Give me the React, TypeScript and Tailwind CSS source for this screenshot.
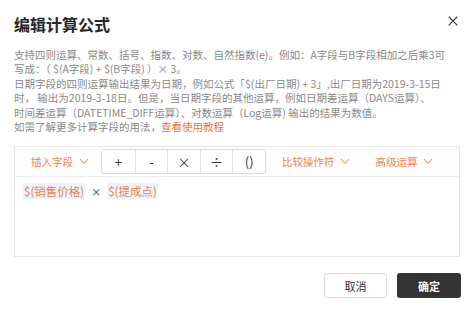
import React from "react";

const Chevron = () => (
  <svg width="10" height="7" viewBox="0 0 10 7" className="ml-[6px]">
    <polyline points="1,1 5,5.5 9,1" fill="none" stroke="#f39a63" strokeWidth="1.1" />
  </svg>
);

export default function App() {
  const font = { fontFamily: '"Noto Sans CJK SC", "Noto Sans", sans-serif' };
  const ops = ["+", "-", "×", "÷", "()"];
  return (
    <div className="w-[474px] h-[314px] bg-white px-[14px] pt-[13px] text-[#333]" style={font}>
      <div className="flex items-center justify-between h-[22px]">
        <div className="text-[16px] font-bold leading-[22px] text-[#262626]">编辑计算公式</div>
        <svg width="10" height="10" viewBox="0 0 10 10" className="mr-[2px] -mt-[6px]">
          <path d="M0.7 0.7 L9.3 9.3 M9.3 0.7 L0.7 9.3" stroke="#333" strokeWidth="1.2" />
        </svg>
      </div>
      <div className="mt-[13px] text-[10.5px] leading-[14.4px] text-[#8a8a8a] whitespace-nowrap">
        <div>支持四则运算、常数、括号、指数、对数、自然指数(e)。例如：A字段与B字段相加之后乘3可</div>
        <div>写成：（ $(A字段) + $(B字段) ）× 3。</div>
        <div>日期字段的四则运算输出结果为日期，例如公式「$(出厂日期) + 3」,出厂日期为2019-3-15日</div>
        <div>时， 输出为2019-3-18日。但是，当日期字段的其他运算，例如日期差运算（DAYS运算）、</div>
        <div>时间差运算（DATETIME_DIFF运算）、对数运算（Log运算) 输出的结果为数值。</div>
        <div>
          如需了解更多计算字段的用法，<span className="text-[#f0763a]">查看使用教程</span>
        </div>
      </div>
      <div className="mt-[12px] h-[111px] border border-[#e8e8e8]">
        <div className="h-[30px] flex items-center border-b border-[#ececec] bg-[#fdfdfd] text-[10.5px] text-[#f0834a] pl-[16px]">
          <div className="flex items-center">
            插入字段
            <Chevron />
          </div>
          <div className="ml-[12px] flex h-[25px] border border-[#dcdcdc] rounded-[3px] bg-white text-[#333]">
            {ops.map((o, i) => (
              <div
                key={o}
                className={`w-[32.6px] flex items-center justify-center text-[13px] ${i > 0 ? "border-l border-[#e3e3e3]" : ""}`}
              >
                {o}
              </div>
            ))}
          </div>
          <div className="ml-[16px] flex items-center">
            比较操作符
            <Chevron />
          </div>
          <div className="ml-[25px] flex items-center">
            高级运算
            <Chevron />
          </div>
        </div>
        <div className="flex items-center pl-[8px] pt-[6px] text-[11.5px]">
          <span className="bg-[#eaf3fb] text-[#f0834a] px-[1px] h-[16px] leading-[16px] rounded-[2px]">$(销售价格)</span>
          <span className="mx-[6px] text-[#333] text-[10px]">×</span>
          <span className="bg-[#eaf3fb] text-[#f0834a] px-[1px] h-[16px] leading-[16px] rounded-[2px]">$(提成点)</span>
        </div>
      </div>
      <div className="mt-[16px] flex justify-end">
        <button className="w-[63px] h-[25px] border border-[#dcdcdc] rounded-[3px] bg-white text-[11px] text-[#333]">
          取消
        </button>
        <button className="ml-[10px] mr-[-1px] w-[64px] h-[25px] rounded-[3px] bg-[#333] text-[11px] font-bold text-white">
          确定
        </button>
      </div>
    </div>
  );
}
